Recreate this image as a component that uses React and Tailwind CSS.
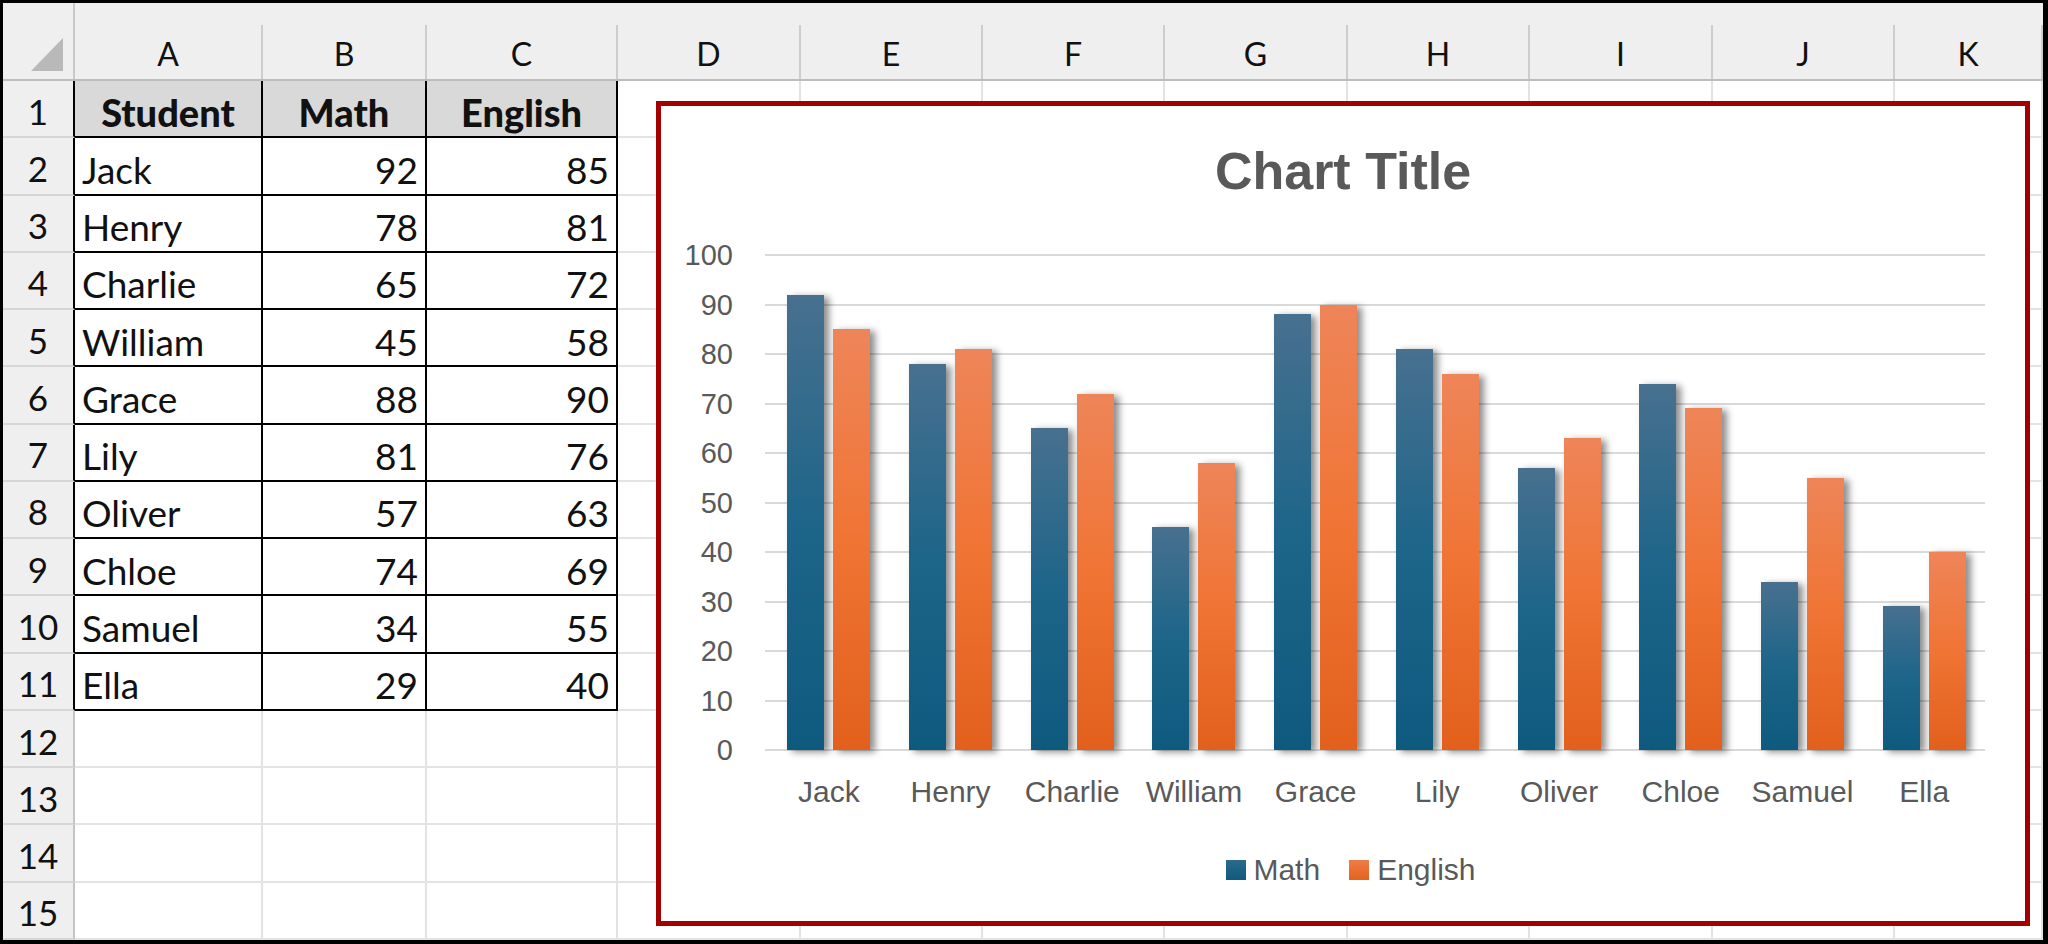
const students = [
  { name: 'Jack', math: 92, english: 85 },
  { name: 'Henry', math: 78, english: 81 },
  { name: 'Charlie', math: 65, english: 72 },
  { name: 'William', math: 45, english: 58 },
  { name: 'Grace', math: 88, english: 90 },
  { name: 'Lily', math: 81, english: 76 },
  { name: 'Oliver', math: 57, english: 63 },
  { name: 'Chloe', math: 74, english: 69 },
  { name: 'Samuel', math: 34, english: 55 },
  { name: 'Ella', math: 29, english: 40 },
];

// column letters with their widths (written out so Tailwind picks them up)
const columns = [
  { key: 'A', w: 'w-[188px]' },
  { key: 'B', w: 'w-[164px]' },
  { key: 'C', w: 'w-[191px]' },
  { key: 'D', w: 'w-[183px]' },
  { key: 'E', w: 'w-[182px]' },
  { key: 'F', w: 'w-[182px]' },
  { key: 'G', w: 'w-[183px]' },
  { key: 'H', w: 'w-[182px]' },
  { key: 'I', w: 'w-[183px]' },
  { key: 'J', w: 'w-[182px]' },
  { key: 'K', w: 'flex-1' },
];

const ticks = [100, 90, 80, 70, 60, 50, 40, 30, 20, 10, 0];
const PLOT_H = 495;

const cellText = (row, col) => {
  if (row === 1) return { A: 'Student', B: 'Math', C: 'English' }[col];
  const s = students[row - 2];
  if (!s) return '';
  if (col === 'A') return s.name;
  if (col === 'B') return s.math;
  if (col === 'C') return s.english;
  return '';
};

const ColumnHeader = () => (
  <div className="flex h-[78px] shrink-0 bg-[#efefef] border-b-2 border-[#bdbdbd]">
    <div className="w-[72px] shrink-0 flex items-end justify-end pr-[10px] pb-[8px] border-r-2 border-[#c9c9c9]">
      <svg width="32" height="33" viewBox="0 0 32 33">
        <polygon points="32,0 32,33 0,33" fill="#b9b9b9" />
      </svg>
    </div>
    {columns.map((c) => (
      <div key={c.key} className={`${c.w} shrink-0 flex pt-[22px]`}>
        <div className="flex-1 flex items-center justify-center pt-[4px] border-r-2 border-[#cdcdcd] text-[32px] text-[#111]">
          {c.key}
        </div>
      </div>
    ))}
  </div>
);

const SheetRow = ({ row }) => {
  const inTable = row <= 11;
  return (
    <div className="flex flex-1">
      <div
        className={`w-[72px] shrink-0 flex items-center justify-center pt-[5px] bg-[#efefef] border-b-2 border-b-[#d6d6d6] border-r-2 text-[35px] leading-none text-[#111] ${
          inTable ? 'border-r-black' : 'border-r-[#c4c4c4]'
        }`}
      >
        {row}
      </div>
      {columns.map((c) => {
        const boxed = inTable && ['A', 'B', 'C'].includes(c.key);
        const head = row === 1 && boxed;
        const text = cellText(row, c.key);
        const numeric = typeof text === 'number';
        return (
          <div
            key={c.key}
            className={`${c.w} shrink-0 flex items-center pt-[7px] leading-none ${
              boxed ? 'border-r-2 border-b-2 border-black' : 'border-r-2 border-b-2 border-[#e3e3e3]'
            } ${
              head
                ? 'bg-[#d9d9d9] justify-center font-black text-[38px]'
                : numeric
                  ? 'justify-end pr-[7px] text-[37px]'
                  : 'pl-[7px] text-[37px]'
            }`}
          >
            {text}
          </div>
        );
      })}
    </div>
  );
};

const Bar = ({ value, tone }) => (
  <div
    className={`w-[37px] ${
      tone === 'math'
        ? 'bg-[linear-gradient(to_bottom,#48708f_0%,#1d6589_50%,#0e5a7e_100%)]'
        : 'bg-[linear-gradient(to_bottom,#ee8559_0%,#f07434_50%,#e2601c_100%)]'
    } shadow-[5px_2px_7px_rgba(0,0,0,0.45)]`}
    style={{ height: (value / 100) * PLOT_H }}
  />
);

const Chart = () => (
  <div className="absolute left-[653px] top-[98px] w-[1374px] h-[825px] bg-white border-[5px] border-[#a30000] flex flex-col font-['Liberation_Sans',Arial,sans-serif] text-[#595959]">
    <div className="pt-[39px] text-center text-[52px] leading-[52px] font-bold">Chart Title</div>

    <div className="flex mt-[43px]">
      <div className="w-[72px] h-[525px] flex flex-col justify-between items-end text-[29px]">
        {ticks.map((t) => (
          <div key={t} className="h-[30px] leading-[30px]">
            {t}
          </div>
        ))}
      </div>
      <div className="relative ml-[32px] w-[1220px] h-[497px] self-center">
        <div className="h-full flex flex-col justify-between">
          {ticks.map((t) => (
            <div key={t} className="h-[2px] bg-[#d9d9d9]" />
          ))}
        </div>
        <div className="absolute left-[3px] right-0 top-0 bottom-[1px] flex">
          {students.map((s) => (
            <div key={s.name} className="flex-1 flex items-end justify-center gap-[9px]">
              <Bar value={s.math} tone="math" />
              <Bar value={s.english} tone="english" />
            </div>
          ))}
        </div>
      </div>
    </div>

    <div className="flex ml-[107px] w-[1217px] mt-[12px]">
      {students.map((s) => (
        <div key={s.name} className="flex-1 text-center text-[30px] leading-[30px]">
          {s.name}
        </div>
      ))}
    </div>

    <div className="flex justify-center pl-[16px] mt-[48px] text-[30px] leading-[30px]">
      <div className="flex items-center gap-[7px]">
        <span className="w-[20px] h-[20px] bg-[linear-gradient(to_bottom,#2b6a8c,#0e5a7e)]" />
        <span>Math</span>
      </div>
      <div className="flex items-center gap-[8px] ml-[29px]">
        <span className="w-[20px] h-[20px] bg-[linear-gradient(to_bottom,#ef7c47,#e5621f)]" />
        <span>English</span>
      </div>
    </div>
  </div>
);

export default function App() {
  const rows = Array.from({ length: 15 }, (_, i) => i + 1);
  return (
    <div className="relative w-[2048px] h-[944px] overflow-hidden bg-white border-black border-t-[3px] border-l-[3px] border-r-[5px] border-b-[4px] flex flex-col font-['Lato',sans-serif] text-[#111]">
      <ColumnHeader />
      <div className="flex-1 flex flex-col">
        {rows.map((r) => (
          <SheetRow key={r} row={r} />
        ))}
      </div>
      <Chart />
    </div>
  );
}
